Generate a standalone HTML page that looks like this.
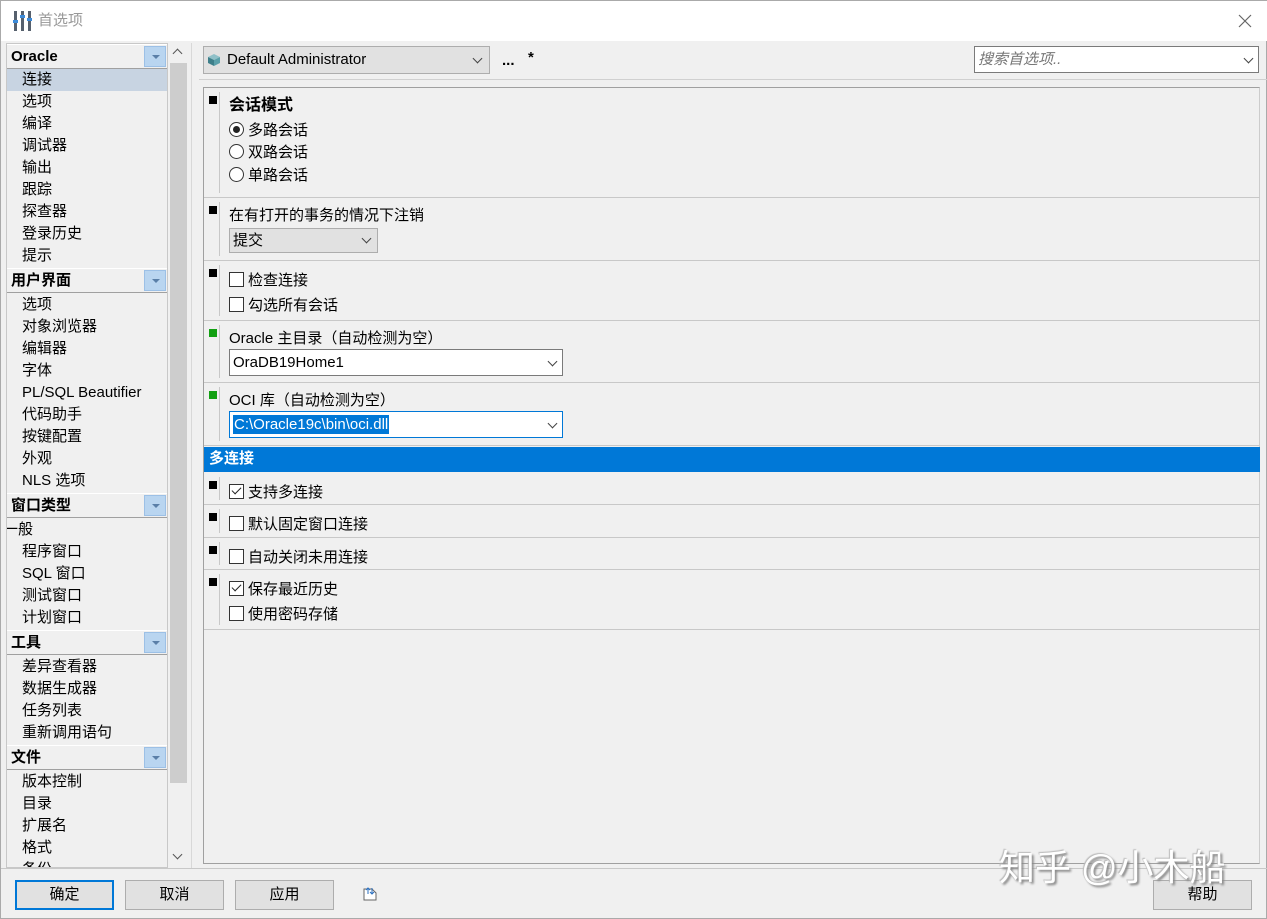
<!DOCTYPE html>
<html><head><meta charset="utf-8"><style>
*{box-sizing:border-box;margin:0;padding:0}
body{width:1267px;height:919px;overflow:hidden;background:#f0f0f0;font-family:"Liberation Sans","Noto Sans CJK SC",sans-serif;font-size:15px;line-height:20px;color:#000;position:relative;border:1px solid #aaa}
.a{position:absolute;white-space:nowrap}
.title{left:0;top:0;width:1267px;height:40px;background:#fff}
.side{left:5px;top:42px;width:162px;height:825px;background:#f0f0f0;border:1px solid #c8c8c8;overflow:hidden}
.it{position:absolute;left:15px;font-size:15px;line-height:22px;height:22px}
.hd{position:absolute;left:0;width:162px;height:25px;border-bottom:1px solid #a0a0a0;border-top:1px solid #fff;font-weight:bold;padding-left:4px;line-height:23px}
.hd i{position:absolute;right:3px;top:1px;width:22px;height:21px;background:#b9d5f0;border:1px solid #9cc0e6}
.hd i:after{content:"";position:absolute;left:7px;top:8px;border-left:4px solid transparent;border-right:4px solid transparent;border-top:4px solid #5a7fa8}
.sb{left:167px;top:42px;width:21px;height:825px;background:#f0f0f0}
.grp{position:absolute;left:203px;width:1056px;border-bottom:1px solid #c8c8c8}
.grp .b{position:absolute;left:5px;top:8px;width:8px;height:8px;background:#000}
.grp .b.g{background:#12a012}
.grp .v{position:absolute;left:15px;top:4px;bottom:4px;width:1px;background:#c8c8c8}
.cb{display:inline-block;width:15px;height:15px;border:1px solid #333;background:#fff;vertical-align:-2px;margin-right:4px;position:relative}
.rd{display:inline-block;width:15px;height:15px;border:1px solid #333;border-radius:50%;background:#fff;vertical-align:-2px;margin-right:4px;position:relative}
.btn{position:absolute;top:879px;width:99px;height:30px;background:#e1e1e1;border:1px solid #adadad;text-align:center;line-height:28px}
.combo{position:absolute;background:#fff;border:1px solid #7a7a7a;height:27px;line-height:25px;padding-left:3px}
.chev{position:absolute;right:6px;top:8px;width:7px;height:7px;border-right:1px solid #444;border-bottom:1px solid #444;transform:rotate(45deg)}
.ck{position:absolute;left:4px;top:0px;width:5px;height:9px;border-right:1.5px solid #222;border-bottom:1.5px solid #222;transform:rotate(45deg)}
</style></head><body>
<div class="a title"></div>
<svg class="a" style="left:12px;top:9px" width="20" height="22" viewBox="0 0 20 22"><g fill="#56606d"><rect x="1" y="1" width="3" height="20"/><rect x="8" y="1" width="3" height="20"/><rect x="15" y="1" width="3" height="20"/></g><g fill="#3c8ad8"><rect x="0" y="10" width="5" height="3"/><rect x="7" y="5" width="5" height="3"/><rect x="14" y="8" width="5" height="3"/></g></svg>
<div class="a" style="left:37px;top:10px;color:#999;font-size:15px">首选项</div>
<svg class="a" style="left:1237px;top:13px" width="14" height="14"><path d="M1 1L13 13M13 1L1 13" stroke="#666" stroke-width="1.2"/></svg>

<div class="a side">
<div class="hd" style="top:0">Oracle<i></i></div>
<div style="position:absolute;left:0;top:25px;width:162px;height:22px;background:#c8d4e2"></div>
<div class="it" style="top:25px">连接</div>
<div class="it" style="top:47px">选项</div>
<div class="it" style="top:69px">编译</div>
<div class="it" style="top:91px">调试器</div>
<div class="it" style="top:113px">输出</div>
<div class="it" style="top:135px">跟踪</div>
<div class="it" style="top:157px">探查器</div>
<div class="it" style="top:179px">登录历史</div>
<div class="it" style="top:201px">提示</div>
<div class="hd" style="top:224px">用户界面<i></i></div>
<div class="it" style="top:250px">选项</div>
<div class="it" style="top:272px">对象浏览器</div>
<div class="it" style="top:294px">编辑器</div>
<div class="it" style="top:316px">字体</div>
<div class="it" style="top:338px">PL/SQL Beautifier</div>
<div class="it" style="top:360px">代码助手</div>
<div class="it" style="top:382px">按键配置</div>
<div class="it" style="top:404px">外观</div>
<div class="it" style="top:426px">NLS 选项</div>
<div class="hd" style="top:449px">窗口类型<i></i></div>
<div class="it" style="top:475px;left:-4px">一般</div>
<div class="it" style="top:497px">程序窗口</div>
<div class="it" style="top:519px">SQL 窗口</div>
<div class="it" style="top:541px">测试窗口</div>
<div class="it" style="top:563px">计划窗口</div>
<div class="hd" style="top:586px">工具<i></i></div>
<div class="it" style="top:612px">差异查看器</div>
<div class="it" style="top:634px">数据生成器</div>
<div class="it" style="top:656px">任务列表</div>
<div class="it" style="top:678px">重新调用语句</div>
<div class="hd" style="top:701px">文件<i></i></div>
<div class="it" style="top:727px">版本控制</div>
<div class="it" style="top:749px">目录</div>
<div class="it" style="top:771px">扩展名</div>
<div class="it" style="top:793px">格式</div>
<div class="it" style="top:815px">备份</div>
</div>
<div class="a sb"><div style="position:absolute;left:2px;top:20px;width:17px;height:720px;background:#cdcdcd"></div>
<div style="position:absolute;left:6px;top:7px;width:7px;height:7px;border-left:1px solid #555;border-top:1px solid #555;transform:rotate(45deg)"></div>
<div style="position:absolute;left:6px;top:808px;width:7px;height:7px;border-right:1px solid #555;border-bottom:1px solid #555;transform:rotate(45deg)"></div></div>
<div class="a" style="left:190px;top:42px;width:1px;height:825px;background:#d8d8d8"></div>

<div class="a" style="left:202px;top:45px;width:287px;height:28px;background:#e1e1e1;border:1px solid #adadad;padding-left:23px;line-height:26px">Default Administrator<div class="chev" style="right:8px;top:8px"></div></div>
<svg class="a" style="left:206px;top:52px" width="14" height="14" viewBox="0 0 14 14"><path d="M7 1 13 4 7 7 1 4Z" fill="#8fc0c8"/><path d="M1 4 7 7 7 13 1 10Z" fill="#3d7f8a"/><path d="M13 4 7 7 7 13 13 10Z" fill="#5aa0aa"/></svg>
<div class="a" style="left:501px;top:50px;font-weight:bold">...</div>
<div class="a" style="left:527px;top:47px;font-weight:bold">*</div>
<div class="combo" style="left:973px;top:45px;width:285px;height:27px;border-color:#7a7a7a;font-style:italic;color:#777">搜索首选项..<div class="chev"></div></div>
<div class="a" style="left:198px;top:78px;width:1069px;height:1px;background:#d0d0d0"></div>

<div class="a" style="left:202px;top:86px;width:1057px;height:777px;border:1px solid #a0a0a0;border-right-color:#ccc"></div>

<div class="grp" style="top:87px;height:110px"><div class="b"></div><div class="v"></div>
<div class="a" style="left:25px;top:8px;font-weight:bold;font-size:16px">会话模式</div>
<div class="a" style="left:25px;top:33px"><span class="rd"><span style="position:absolute;left:3px;top:3px;width:7px;height:7px;border-radius:50%;background:#222"></span></span>多路会话</div>
<div class="a" style="left:25px;top:55px"><span class="rd"></span>双路会话</div>
<div class="a" style="left:25px;top:78px"><span class="rd"></span>单路会话</div></div>

<div class="grp" style="top:197px;height:63px"><div class="b"></div><div class="v"></div>
<div class="a" style="left:25px;top:8px">在有打开的事务的情况下注销</div>
<div class="a" style="left:25px;top:30px;width:149px;height:25px;background:#e1e1e1;border:1px solid #adadad;padding-left:3px;line-height:23px">提交<div class="chev" style="top:6px;right:7px"></div></div></div>

<div class="grp" style="top:260px;height:60px"><div class="b"></div><div class="v"></div>
<div class="a" style="left:25px;top:10px"><span class="cb"></span>检查连接</div>
<div class="a" style="left:25px;top:35px"><span class="cb"></span>勾选所有会话</div></div>

<div class="grp" style="top:320px;height:62px"><div class="b g"></div><div class="v"></div>
<div class="a" style="left:25px;top:8px">Oracle 主目录（自动检测为空）</div>
<div class="combo" style="left:25px;top:28px;width:334px">OraDB19Home1<div class="chev"></div></div></div>

<div class="grp" style="top:382px;height:63px"><div class="b g"></div><div class="v"></div>
<div class="a" style="left:25px;top:8px">OCI 库（自动检测为空）</div>
<div class="combo" style="left:25px;top:28px;width:334px;border-color:#0078d7"><span style="background:#0078d7;color:#fff;padding:1px 1px">C:\Oracle19c\bin\oci.dll</span><div class="chev"></div></div></div>

<div class="a" style="left:203px;top:446px;width:1056px;height:25px;background:#0078d7;color:#fff;font-weight:bold;padding-left:5px;line-height:24px">多连接</div>

<div class="grp" style="top:472px;height:32px"><div class="b"></div><div class="v"></div>
<div class="a" style="left:25px;top:10px"><span class="cb"><span class="ck"></span></span>支持多连接</div></div>
<div class="grp" style="top:504px;height:33px"><div class="b"></div><div class="v"></div>
<div class="a" style="left:25px;top:10px"><span class="cb"></span>默认固定窗口连接</div></div>
<div class="grp" style="top:537px;height:32px"><div class="b"></div><div class="v"></div>
<div class="a" style="left:25px;top:10px"><span class="cb"></span>自动关闭未用连接</div></div>
<div class="grp" style="top:569px;height:60px"><div class="b"></div><div class="v"></div>
<div class="a" style="left:25px;top:10px"><span class="cb"><span class="ck"></span></span>保存最近历史</div>
<div class="a" style="left:25px;top:35px"><span class="cb"></span>使用密码存储</div></div>

<div class="a" style="left:0;top:867px;width:1267px;height:1px;background:#c8c8c8"></div>
<div class="btn" style="left:14px;border:2px solid #0078d7;line-height:26px">确定</div>
<div class="btn" style="left:124px">取消</div>
<div class="btn" style="left:234px">应用</div>
<svg class="a" style="left:361px;top:885px" width="16" height="16" viewBox="0 0 16 16"><path d="M2 3h8l4 4v7H2Z" fill="#fff" stroke="#666"/><path d="M6 2v6M4 4l2-2 2 2M10 8V2M8 6l2 2 2-2" stroke="#2a6fc0" fill="none"/></svg>
<div class="btn" style="left:1152px">帮助</div>
<div class="a" style="left:998px;top:845px;font-size:36px;line-height:44px;color:#fff;text-shadow:2px 2px 2px #888,-1px -1px 1px #bbb">知乎 @小木船</div>
</body></html>
